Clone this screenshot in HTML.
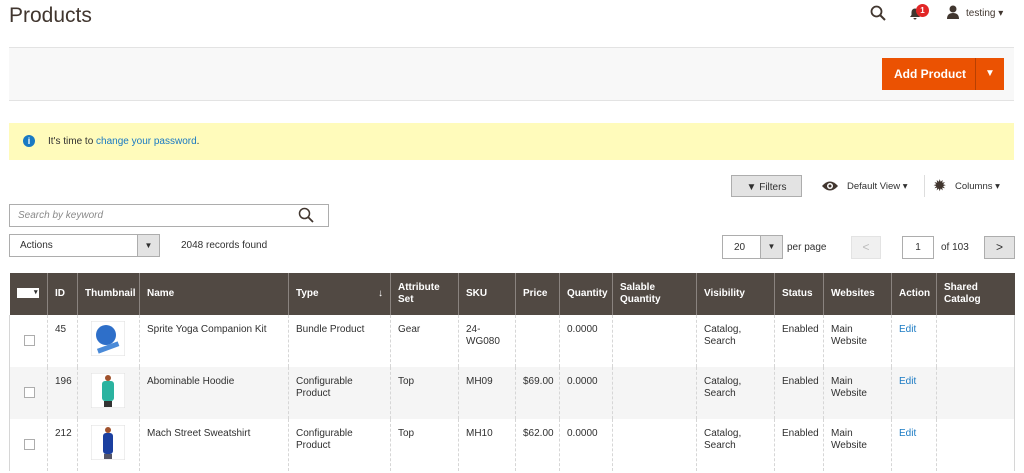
<!DOCTYPE html>
<html><head><style>
*{box-sizing:border-box;margin:0;padding:0}
body{width:1024px;height:473px;overflow:hidden;background:#fff;font-family:"Liberation Sans",sans-serif;color:#303030;position:relative;font-size:10px}
.a{position:absolute}
table{position:absolute;left:9px;top:273px;border-collapse:collapse;table-layout:fixed;width:1005px}
th{background:#514943;color:#fff;font-weight:bold;font-size:10px;text-align:left;padding:0 7px;height:42px;border-left:1px solid #8a837f;line-height:12px;vertical-align:middle}
th:first-child{border-left:none}
td{font-size:10px;color:#303030;vertical-align:top;padding:9px 7px 0;border-left:1px dashed #d6d6d6;line-height:12px;height:52px}
td:first-child{border-left:1px solid #d6d6d6}
td:last-child{border-right:1px solid #d6d6d6}
tr.g td{background:#f5f5f5}
a{color:#1979c3;text-decoration:none}
.cb{width:11px;height:11px;border:1px solid #adadad;background:#fff;margin:12px 0 0 7px}
.btn{border:1px solid #adadad;background:#fff}
</style></head><body>
<div class="a" style="left:9px;top:4px;font-size:21px;color:#41362f">Products</div>
<svg class="a" style="left:870px;top:5px" width="16" height="16" viewBox="0 0 16 16"><circle cx="6.5" cy="6.5" r="5" fill="none" stroke="#41362f" stroke-width="1.8"/><path d="M10 10l5 5" stroke="#41362f" stroke-width="2"/></svg>
<svg class="a" style="left:908px;top:6px" width="14" height="14" viewBox="0 0 14 14"><path d="M2 11h10l-1.5-2V6a3.5 3.5 0 0 0-7 0v3z M5.5 12a1.5 1.5 0 0 0 3 0z" fill="#41362f"/></svg>
<div class="a" style="left:916px;top:4px;width:13px;height:13px;border-radius:50%;background:#e22626;color:#fff;font-size:8px;font-weight:bold;text-align:center;line-height:13px">1</div>
<svg class="a" style="left:946px;top:5px" width="14" height="14" viewBox="0 0 14 14"><circle cx="7" cy="4" r="3.5" fill="#41362f"/><path d="M1 14c0-4 2-6 6-6s6 2 6 6z" fill="#41362f"/></svg>
<div class="a" style="left:966px;top:8px;font-size:10px;color:#41362f">testing ▾</div>
<div class="a" style="left:9px;top:47px;width:1005px;height:54px;background:#f8f8f8;border-top:1px solid #e3e3e3;border-bottom:1px solid #e3e3e3"></div>
<div class="a" style="left:882px;top:58px;width:122px;height:32px;background:#eb5202;color:#fff;font-weight:bold;font-size:12px;line-height:32px;padding-left:12px">Add Product</div>
<div class="a" style="left:975px;top:58px;width:1px;height:32px;background:#b84002"></div>
<div class="a" style="left:985px;top:67px;color:#fff;font-size:10px;line-height:14px">▼</div>
<div class="a" style="left:9px;top:123px;width:1005px;height:37px;background:#fffbbb"></div>
<div class="a" style="left:23px;top:135px;width:12px;height:12px;border-radius:50%;background:#1979c3;color:#fff;font-size:9px;font-weight:bold;text-align:center;line-height:12px">i</div>
<div class="a" style="left:48px;top:136px;font-size:10px">It's time to <a>change your password</a>.</div>
<div class="a" style="left:731px;top:175px;width:71px;height:22px;background:#e3e3e3;border:1px solid #adadad;font-size:10px;line-height:21px;padding-top:1px;text-align:center">▼ Filters</div>
<svg class="a" style="left:821px;top:180px" width="18" height="12" viewBox="0 0 18 12"><path d="M1 6Q9-3 17 6Q9 15 1 6z" fill="#41362f"/><circle cx="9" cy="6" r="3" fill="#fff"/><circle cx="9" cy="6" r="1.5" fill="#41362f"/></svg>
<div class="a" style="left:847px;top:181px;font-size:9.5px">Default View ▾</div>
<div class="a" style="left:924px;top:175px;width:1px;height:22px;background:#ddd"></div>
<div class="a" style="left:933px;top:176px;font-size:16px;color:#41362f">✹</div>
<div class="a" style="left:955px;top:181px;font-size:9.5px">Columns ▾</div>
<div class="a btn" style="left:9px;top:204px;width:320px;height:23px"></div>
<div class="a" style="left:18px;top:210px;font-style:italic;color:#8a8a8a;font-size:10px">Search by keyword</div>
<svg class="a" style="left:298px;top:207px" width="16" height="16" viewBox="0 0 16 16"><circle cx="6.5" cy="6.5" r="5" fill="none" stroke="#41362f" stroke-width="1.5"/><path d="M10 10l5 5" stroke="#41362f" stroke-width="1.8"/></svg>
<div class="a btn" style="left:9px;top:234px;width:151px;height:23px"></div>
<div class="a" style="left:137px;top:235px;width:22px;height:21px;background:#e3e3e3;border-left:1px solid #adadad;font-size:8px;text-align:center;line-height:21px">▼</div>
<div class="a" style="left:20px;top:240px;font-size:10px;line-height:12px">Actions</div>
<div class="a" style="left:181px;top:240px;font-size:10px;line-height:12px">2048 records found</div>
<div class="a btn" style="left:722px;top:235px;width:61px;height:24px"></div>
<div class="a" style="left:760px;top:236px;width:22px;height:22px;background:#e3e3e3;border-left:1px solid #adadad;font-size:8px;text-align:center;line-height:22px">▼</div>
<div class="a" style="left:734px;top:242px">20</div>
<div class="a" style="left:787px;top:242px">per page</div>
<div class="a" style="left:851px;top:236px;width:30px;height:23px;background:#f0f0f0;border:1px solid #e3e3e3;color:#bbb;text-align:center;line-height:21px;font-size:12px">&lt;</div>
<div class="a btn" style="left:902px;top:236px;width:32px;height:23px;text-align:center;line-height:22px">1</div>
<div class="a" style="left:941px;top:242px">of 103</div>
<div class="a" style="left:984px;top:236px;width:31px;height:23px;background:#e3e3e3;border:1px solid #adadad;text-align:center;line-height:21px;font-size:12px">&gt;</div>
<table>
<colgroup><col style="width:38px"><col style="width:30px"><col style="width:62px"><col style="width:149px"><col style="width:102px"><col style="width:68px"><col style="width:57px"><col style="width:44px"><col style="width:53px"><col style="width:84px"><col style="width:78px"><col style="width:49px"><col style="width:68px"><col style="width:45px"><col style="width:78px"></colgroup>
<tr><th><span style="display:inline-block;width:22px;height:10px;background:#fff;vertical-align:middle;font-size:7px;color:#303030;text-align:right;padding-right:1px;line-height:10px">▾</span></th><th>ID</th><th>Thumbnail</th><th>Name</th><th>Type<span style="float:right">↓</span></th><th>Attribute Set</th><th>SKU</th><th>Price</th><th>Quantity</th><th>Salable Quantity</th><th>Visibility</th><th>Status</th><th>Websites</th><th>Action</th><th>Shared Catalog</th></tr>
<tr><td style="padding:0"><div class="cb" style="margin-top:20px;margin-left:14px"></div></td><td>45</td><td style="padding:6px 0 0 13px"><svg width="34" height="35"><rect width="34" height="35" fill="#fff" stroke="#ddd"/><circle cx="15" cy="14" r="10" fill="#2e6fc9"/><rect x="6" y="24" width="22" height="5" fill="#4a8ad8" transform="rotate(-20 17 26)"/></svg></td><td>Sprite Yoga Companion Kit</td><td>Bundle Product</td><td>Gear</td><td>24-<br>WG080</td><td></td><td>0.0000</td><td></td><td>Catalog,<br>Search</td><td>Enabled</td><td>Main<br>Website</td><td><a>Edit</a></td><td></td></tr>
<tr class="g"><td style="padding:0"><div class="cb" style="margin-top:20px;margin-left:14px"></div></td><td>196</td><td style="padding:6px 0 0 13px"><svg width="34" height="35"><rect width="34" height="35" fill="#fff" stroke="#ddd"/><rect x="11" y="8" width="12" height="20" rx="3" fill="#2bb3a0"/><circle cx="17" cy="5" r="3" fill="#a0522d"/><rect x="13" y="28" width="8" height="6" fill="#333"/></svg></td><td>Abominable Hoodie</td><td>Configurable<br>Product</td><td>Top</td><td>MH09</td><td>$69.00</td><td>0.0000</td><td></td><td>Catalog,<br>Search</td><td>Enabled</td><td>Main<br>Website</td><td><a>Edit</a></td><td></td></tr>
<tr><td style="padding:0"><div class="cb" style="margin-top:20px;margin-left:14px"></div></td><td>212</td><td style="padding:6px 0 0 13px"><svg width="34" height="35"><rect width="34" height="35" fill="#fff" stroke="#ddd"/><rect x="12" y="8" width="10" height="21" rx="3" fill="#1b3fa0"/><circle cx="17" cy="5" r="3" fill="#a0522d"/><rect x="13" y="29" width="8" height="5" fill="#556"/></svg></td><td>Mach Street Sweatshirt</td><td>Configurable<br>Product</td><td>Top</td><td>MH10</td><td>$62.00</td><td>0.0000</td><td></td><td>Catalog,<br>Search</td><td>Enabled</td><td>Main<br>Website</td><td><a>Edit</a></td><td></td></tr>
</table>
</body></html>
